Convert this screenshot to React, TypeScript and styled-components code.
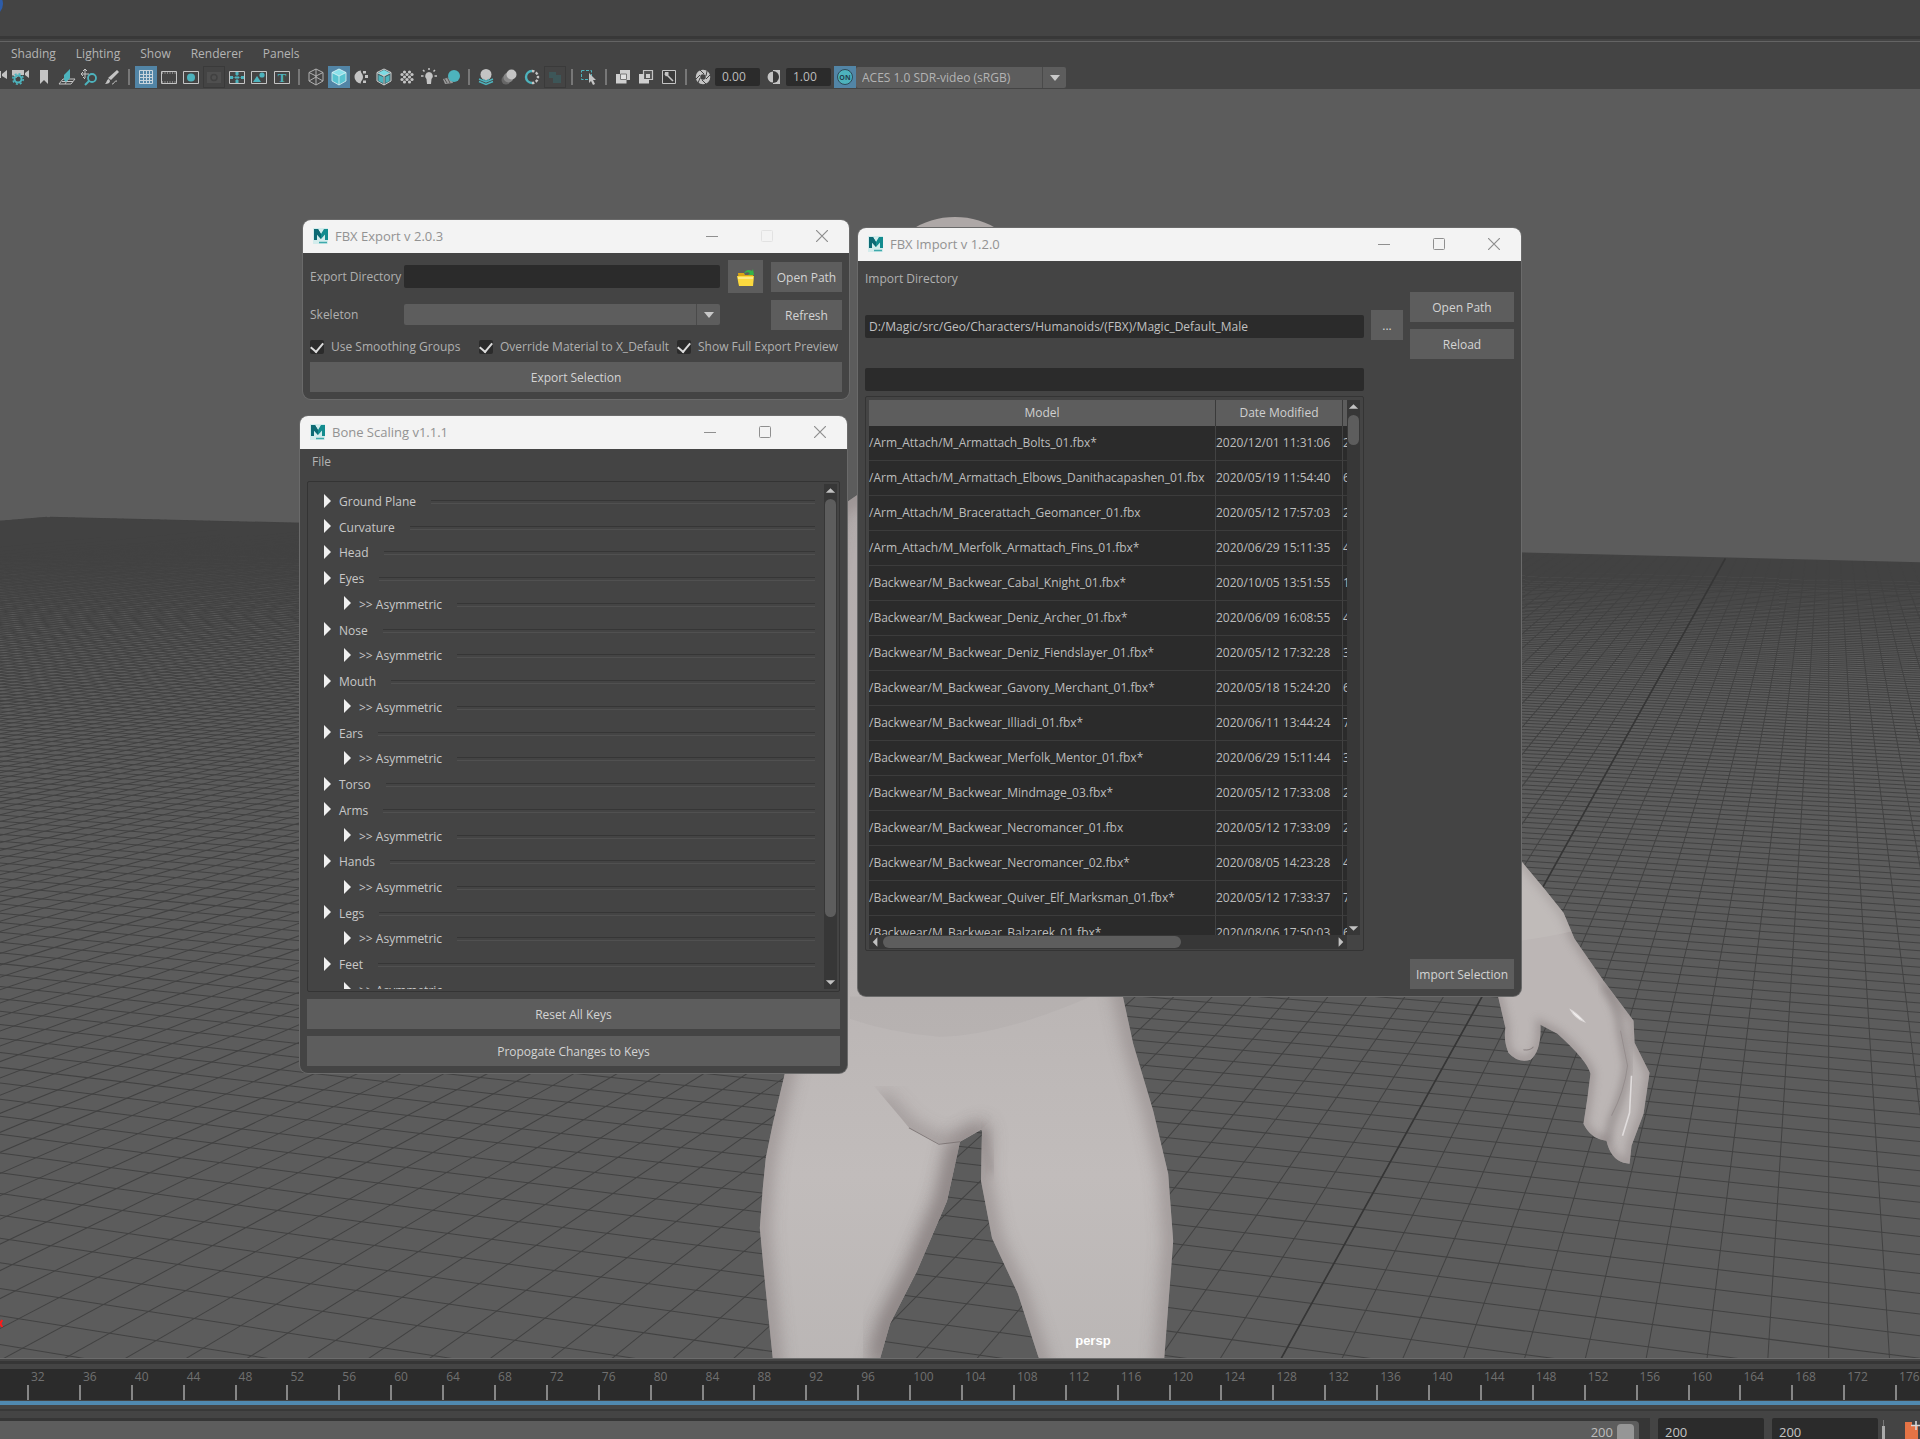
import React from "react";
import styled, { createGlobalStyle, css } from "styled-components";

const TEAL = "#4db3bd";
const LIGHT = "#c4c4c4";

const GlobalStyle = createGlobalStyle`
  * { box-sizing: border-box; }
  body { margin: 0; background: #444444; }
  body, button, input, select, table {
    font-family: "Open Sans", "Noto Sans", sans-serif;
    font-size: 12px;
    line-height: 18px;
    color: #bdbdbd;
  }
  button, input, select { margin: 0; border: 0; border-radius: 0; padding: 0; }
  svg { display: block; }
`;

const Shell = styled.div`
  display: flex;
  flex-direction: column;
  height: 100vh;
  overflow: hidden;
  background: #444444;
`;

/* ---------- top bars ---------- */

const Shelf = styled.div`
  flex: none;
  height: 36px;
`;

const Rule = styled.div<{ $tone: string; $size: number }>`
  flex: none;
  height: ${(p) => p.$size}px;
  background: ${(p) => p.$tone};
`;

const MenuBar = styled.nav`
  flex: none;
  display: flex;
  align-items: center;
  gap: 20px;
  height: 23px;
  padding: 1px 0 0 11px;
`;

const MenuButton = styled.button`
  background: none;
  color: #b4b4b4;
`;

const ToolBar = styled.div`
  flex: none;
  display: flex;
  align-items: center;
  height: 24px;
`;

const ToolGroup = styled.div<{ $width: number }>`
  flex: none;
  display: flex;
  justify-content: space-between;
  width: ${(p) => p.$width}px;
`;

const Tool = styled.button<{ $active?: boolean; $off?: boolean }>`
  width: 22px;
  height: 22px;
  background: ${(p) => (p.$active ? "#5285a6" : "none")};
  ${(p) => p.$off && css`box-shadow: inset 0 0 0 1px #3a3a3a;`}
`;

const Separator = styled.span`
  flex: none;
  width: 12px;
  height: 16px;
  background: linear-gradient(#777, #777) center / 2px 100% no-repeat;
`;

const NumberField = styled.input`
  width: 45px;
  height: 18px;
  margin: 0 3px 0 1px;
  padding-left: 7px;
  background: #2b2b2b;
  border-radius: 2px;
`;

const Combo = styled.div<{ $width?: number }>`
  position: relative;
  display: flex;
  height: 21px;
  ${(p) => (p.$width ? `width: ${p.$width}px;` : "flex: 1;")}
  background: #5d5d5d;
  border-radius: 2px;
  &::before {
    content: "";
    position: absolute;
    right: 23px;
    width: 1px;
    height: 100%;
    background: #4a4a4a;
  }
  &::after {
    content: "";
    position: absolute;
    right: 6px;
    top: 8px;
    border: 5px solid transparent;
    border-top: 6px solid #c8c8c8;
    border-bottom: 0;
  }
`;

const ComboSelect = styled.select`
  appearance: none;
  flex: 1;
  padding: 2px 0 0 6px;
  background: transparent;
  color: #b4b4b4;
`;

/* ---------- viewport ---------- */

const Viewport = styled.main`
  position: relative;
  flex: 1;
  min-height: 0;
  background: #5c5c5c;
  border-bottom: 1px solid #6c6c6c;
`;

const Scene = styled.svg`
  width: 100%;
  height: 100%;
`;

const CameraName = styled.span`
  position: absolute;
  left: 56%;
  bottom: 8px;
  color: #ffffff;
  font: bold 13px/18px "Liberation Sans", sans-serif;
`;

/* ---------- floating windows ---------- */

const Frame = styled.section<{ $x: number; $y: number; $w: number; $h: number }>`
  position: absolute;
  left: ${(p) => p.$x}px;
  top: ${(p) => p.$y}px;
  width: ${(p) => p.$w}px;
  height: ${(p) => p.$h}px;
  display: flex;
  flex-direction: column;
  overflow: hidden;
  border-radius: 8px;
  background: #444444;
  box-shadow: 0 0 0 1px #6a6a6a;
`;

const TitleBar = styled.header`
  flex: none;
  display: flex;
  align-items: center;
  height: 33px;
  padding: 0 0 2px 9px;
  background: #f3f3f3;
`;

const Title = styled.h2`
  flex: 1;
  margin: 0 0 0 5px;
  font-size: 13px;
  font-weight: 400;
  color: #929292;
`;

const Caption = styled.button<{ $faint?: boolean }>`
  width: 55px;
  height: 31px;
  background: none;
  color: ${(p) => (p.$faint ? "#e2e2e2" : "#8f8f8f")};
  svg { margin: 0 auto; }
`;

const Push = styled.button`
  flex: none;
  height: 30px;
  padding-top: 2px;
  background: #5d5d5d;
  color: #d4d4d4;
`;

const TextBox = styled.input`
  height: 23px;
  width: 100%;
  padding: 0 4px;
  background: #2b2b2b;
  border-radius: 2px;
  color: #c0c0c0;
`;

const FieldLabel = styled.label`
  padding-top: 1px;
  color: #b0b0b0;
  white-space: nowrap;
`;

/* export window */

const ExportBody = styled.div`
  flex: 1;
  display: flex;
  flex-direction: column;
  justify-content: space-between;
  padding: 7px;
`;

const ExportGrid = styled.div`
  display: grid;
  grid-template-columns: 86px 1fr 35px 71px;
  grid-template-rows: 33px 33px;
  row-gap: 5px;
  column-gap: 8px;
  align-items: center;
`;

const FolderButton = styled(Push)`
  height: 33px;
  svg { margin: 0 auto; }
`;

const RefreshButton = styled(Push)`
  grid-column: 4;
`;

const Checks = styled.div`
  display: grid;
  grid-template-columns: 169px 198px 1fr;
`;

const CheckLabel = styled.label`
  display: flex;
  align-items: center;
  gap: 7px;
  color: #b0b0b0;
  white-space: nowrap;
`;

const CheckInput = styled.input`
  appearance: none;
  width: 14px;
  height: 14px;
  background: #2b2b2b;
  border-radius: 2px;
  display: grid;
  place-items: center;
  &:checked::before {
    content: "";
    width: 6px;
    height: 10px;
    margin-bottom: 3px;
    border: solid #dcdcdc;
    border-width: 0 2px 2px 0;
    transform: rotate(40deg);
  }
`;

/* bone scaling window */

const BoneMenu = styled.nav`
  flex: none;
  display: flex;
  align-items: center;
  height: 25px;
  padding-left: 12px;
`;

const BoneBody = styled.div`
  flex: 1;
  min-height: 0;
  display: flex;
  flex-direction: column;
  gap: 7px;
  padding: 7px;
`;

const ListFrame = styled.div`
  flex: 1;
  min-height: 0;
  display: flex;
  overflow: hidden;
  padding: 2px;
  border: 1px solid #343434;
  border-radius: 2px;
`;

const ListClip = styled.div`
  flex: 1;
  overflow: hidden;
`;

const SectionList = styled.div`
  display: flex;
  flex-direction: column;
  justify-content: space-between;
  height: 518px;
  padding: 7px 9px 0 14px;
`;

const SectionButton = styled.button<{ $nested?: boolean }>`
  flex: none;
  display: flex;
  align-items: center;
  height: 22px;
  padding-left: ${(p) => (p.$nested ? 20 : 0)}px;
  background: none;
  color: #c8c8c8;
  &::before {
    content: "";
    margin: 0 8px 3px 0;
    border: 7px solid transparent;
    border-left-color: #f0f0f0;
    border-right: 0;
  }
  &::after {
    content: "";
    flex: 1;
    height: 2px;
    margin-left: 15px;
    border-top: 1px solid #363636;
    border-bottom: 1px solid #505050;
  }
`;

/* scroll bars */

const arrows = {
  up: "M2 9 L7 4 L12 9 Z",
  down: "M2 5 L7 10 L12 5 Z",
  left: "M9 2 L4 7 L9 12 Z",
  right: "M5 2 L10 7 L5 12 Z",
};

const Track = styled.div<{ $row?: boolean }>`
  flex: none;
  display: flex;
  flex-direction: ${(p) => (p.$row ? "row" : "column")};
  ${(p) => (p.$row ? "height: 14px;" : "width: 13px;")}
  background: #373737;
  overflow: hidden;
`;

const Thumb = styled.div<{ $size: number }>`
  flex: 0 0 ${(p) => p.$size}px;
  margin: 1px;
  border-radius: 6px;
  background: #5d5d5d;
`;

const Fill = styled.div`
  flex: 1;
`;

const ArrowMark = styled.svg`
  flex: none;
  width: 13px;
  height: 14px;
  fill: #c2c2c2;
`;

const Arrow = ({ dir }: { dir: keyof typeof arrows }) => (
  <ArrowMark viewBox="0 0 14 14" aria-hidden="true">
    <path d={arrows[dir]} />
  </ArrowMark>
);

/* import window */

const ImportBody = styled.div`
  flex: 1;
  min-height: 0;
  display: grid;
  grid-template-columns: 1fr 32px 104px;
  column-gap: 7px;
  padding: 8px 7px 7px;
`;

const ImportMain = styled.div`
  display: flex;
  flex-direction: column;
  min-width: 0;
  min-height: 0;
  padding-bottom: 38px;
`;

const PathRow = styled.div`
  padding: 27px 0 30px;
`;

const SideColumn = styled.div<{ $top: number }>`
  display: flex;
  flex-direction: column;
  gap: 7px;
  padding-top: ${(p) => p.$top}px;
`;

const TableFrame = styled.div`
  flex: 1;
  min-height: 0;
  display: grid;
  grid-template-columns: 1fr 13px;
  grid-template-rows: 1fr 14px;
  margin-top: 5px;
  padding: 3px 3px 1px;
  border: 1px solid #343434;
  border-radius: 2px;
`;

const TableClip = styled.div`
  min-width: 0;
  min-height: 0;
  overflow: hidden;
  background: #2b2b2b;
`;

const FileTable = styled.table`
  table-layout: fixed;
  width: 640px;
  border-spacing: 0;
  th, td {
    padding: 0;
    border-right: 1px solid #424242;
    font-weight: 400;
    text-align: left;
    white-space: nowrap;
    overflow: hidden;
  }
  th {
    height: 26px;
    background: #5d5d5d;
    border-right-color: #3a3a3a;
    color: #d0d0d0;
    text-align: center;
  }
  td {
    height: 35px;
    border-bottom: 1px solid #3c3c3c;
  }
`;

const ModelColumn = styled.col`
  width: 347px;
`;

const DateColumn = styled.col`
  width: 127px;
`;

/* timeline */

const Timeline = styled.div`
  flex: none;
  overflow: hidden;
  height: 31px;
  background: #2b2b2b;
`;

const TickRow = styled.ol`
  display: flex;
  list-style: none;
  margin: 0 -27px 0 27px;
  padding: 0;
`;

const Tick = styled.li`
  flex: 1 1 0;
  height: 31px;
  padding-left: 4px;
  line-height: 15px;
  color: #707070;
  background: linear-gradient(#868686, #868686) left bottom / 2px 15px no-repeat;
`;

const RangeRow = styled.footer`
  flex: none;
  display: flex;
  align-items: stretch;
  height: 21px;
`;

const RangeTrack = styled.div`
  flex: 1;
  padding: 3px 11px 0 0;
  background: #363636;
`;

const RangeBar = styled.div`
  display: flex;
  justify-content: flex-end;
  gap: 4px;
  height: 18px;
  padding: 3px 5px 0 0;
  background: #5d5d5d;
  border-radius: 0 4px 0 0;
`;

const RangeValue = styled.output`
  font-size: 13px;
  line-height: 16px;
`;

const RangeGrip = styled.span`
  width: 17px;
  height: 20px;
  border-radius: 4px;
  background: #969696;
`;

const RangeField = styled.input`
  width: 106px;
  margin-left: 8px;
  padding: 7px 7px 0;
  background: #2b2b2b;
  border-radius: 2px 2px 0 0;
  font-size: 13px;
  color: #c4c4c4;
`;

/* ---------- icons ---------- */

const cube = "M11 3 L18 6.5 V15 L11 19 L4 15 V6.5 Z";

const icons: Record<string, React.ReactNode> = {
  cameraGear: (
    <>
      <path d="M2 4h12v5H9.500L6 12 3.500 9.500H2z M15 7l4-3v8l-4-3z" fill={LIGHT} />
      <circle cx="8" cy="13" r="3.500" fill="none" stroke={TEAL} strokeWidth="2" />
      <circle cx="8" cy="13" r="5.200" fill="none" stroke={TEAL} strokeWidth="1.600" strokeDasharray="2 2.080" />
    </>
  ),
  bookmark: <path d="M7 4h8v14l-4-4-4 4z" fill={LIGHT} />,
  plane: (
    <>
      <path d="M3 18l4-5h12l-4 5z M6 15.500h11 M9 18l3-5" fill="none" stroke={LIGHT} />
      <path d="M8 14V9l6-6v9l-4 4z" fill={TEAL} />
    </>
  ),
  panZoom: (
    <>
      <circle cx="14" cy="12" r="4" fill="none" stroke={TEAL} strokeWidth="1.800" />
      <path d="M11 15l-4 4" stroke={TEAL} strokeWidth="2" />
      <path d="M7 3v9M3 8h8M5 5l2-2 2 2M5 6L3 8l2 2M5 11l2 2" stroke={LIGHT} fill="none" />
    </>
  ),
  pencil: (
    <>
      <path d="M16 4l2 2-8 8-3-2z" fill={LIGHT} />
      <path d="M8 13c-2 0-2 3-4 5 3 0 5-1 5-3" fill={LIGHT} />
      <path d="M11 18c3 0 1-3 5-3" fill="none" stroke={LIGHT} />
    </>
  ),
  grid: (
    <path d="M4.500 4.500h13v13h-13z M8.500 4v14M11.500 4v14M14.500 4v14M4 8.500h14M4 11.500h14M4 14.500h14" fill="none" stroke="#c8d4dc" />
  ),
  film: (
    <>
      <path d="M3.500 5.500h15v12h-15z" fill="none" stroke={LIGHT} />
      <path d="M4 7h14M4 16h14" stroke={LIGHT} strokeDasharray="1 1.500" />
    </>
  ),
  gate: (
    <>
      <path d="M3.500 5.500h15v12h-15z" fill="none" stroke={LIGHT} />
      <circle cx="11" cy="11.500" r="4" fill={TEAL} />
    </>
  ),
  gateOff: (
    <>
      <path d="M4 6h14v11H4z" fill="#4f4f4f" />
      <circle cx="11" cy="11.500" r="3" fill="none" stroke="#414141" strokeWidth="1.500" />
    </>
  ),
  chart: (
    <>
      <path d="M3.500 5.500h15v12h-15z" fill="none" stroke={LIGHT} />
      <path d="M9.500 6h3v3h-3z M9.500 14h3v3h-3z M4 10h3v3H4z M15 10h3v3h-3z M9 10.500h4v2H9z" fill={TEAL} />
      <path d="M7.500 11.500h7M11 9v5" stroke={TEAL} strokeDasharray="1 1" />
    </>
  ),
  safeAction: (
    <>
      <path d="M3.500 5.500h15v12h-15z" fill="none" stroke={LIGHT} />
      <path d="M5 16l4-6 4 6z" fill={TEAL} />
      <circle cx="14" cy="9" r="2.600" fill={TEAL} />
    </>
  ),
  safeTitle: (
    <>
      <path d="M3.500 5.500h15v12h-15z" fill="none" stroke={LIGHT} />
      <text x="11" y="16" textAnchor="middle" fontSize="13" fontWeight="700" fontFamily="Liberation Serif, serif" fill={TEAL}>T</text>
    </>
  ),
  wireCube: (
    <path d={`${cube} M4 6.500l7 3.500 7-3.500 M11 10v9 M11 3v8 M4 15l7-4 7 4`} fill="none" stroke="#b0b0b0" />
  ),
  solidCube: (
    <>
      <path d={cube} fill="#58c3d0" />
      <path d="M11 3l7 3.500-7 3.500-7-3.500z" fill="#8be0ea" />
      <path d={`${cube} M4 6.500l7 3.500 7-3.500 M11 10v9`} fill="none" stroke="#e0f2f4" strokeWidth=".8" />
    </>
  ),
  halfSphere: (
    <>
      <path d="M11 4.500a6.500 6.500 0 0 0 0 13c-1-2 2-3 2-6.500s-3-4.500-2-6.500z" fill={LIGHT} />
      <path d="M13 5h3v2.500h-3z M15 9h3v3h-3z M13 14.500h3V17h-3z" fill={LIGHT} />
    </>
  ),
  texturedCube: (
    <>
      <path d={cube} fill="#3d5e62" />
      <path d="M11 4l6 3-6 3-6-3z" fill="#7ddbe4" />
      <path d="M5.500 9l4.500 2v6l-4.500-2z M12.500 11l4-2v6l-4 2z" fill={TEAL} />
      <path d={`${cube} M4 6.500l7 3.500 7-3.500 M11 10v9`} fill="none" stroke="#d0d0d0" />
    </>
  ),
  checker: (
    <g fill={LIGHT}>
      {[[8.500, 6], [13.500, 6], [6, 8.500], [11, 8.500], [16, 8.500], [8.500, 11], [13.500, 11], [6, 13.500], [11, 13.500], [16, 13.500], [8.500, 16], [13.500, 16]].map(
        ([x, y]) => <circle key={`${x}-${y}`} cx={x} cy={y} r="1.600" />
      )}
    </g>
  ),
  bulb: (
    <>
      <path d="M11 6a4 4 0 0 1 2.500 7l-.5 5h-4l-.5-5A4 4 0 0 1 11 6z" fill={LIGHT} />
      <path d="M11 2v2M5 4l1.500 1.500M17 4l-1.500 1.500M3 10h2.500M16.500 10H19" stroke={LIGHT} strokeWidth="1.500" />
    </>
  ),
  shadow: (
    <>
      <path d="M2 13l8-2 2 6-8 1z" fill="#9a9a9a" />
      <circle cx="13" cy="10" r="6" fill={TEAL} />
      <path d="M3 12l3 5M6 11l3 6" stroke="#555" />
    </>
  ),
  occlusion: (
    <>
      <path d="M4 13l7 3 7-3M4 15.500l7 3 7-3" fill="none" stroke={TEAL} strokeWidth="1.400" />
      <circle cx="11" cy="8.500" r="5.500" fill={LIGHT} />
      <path d="M8 13l3 2 3-2" fill="none" stroke={TEAL} />
    </>
  ),
  motionBlur: (
    <>
      <circle cx="8" cy="14" r="4.500" fill="#666" />
      <circle cx="10.500" cy="11.500" r="5" fill="#888" />
      <circle cx="13.500" cy="8.500" r="5" fill={LIGHT} />
    </>
  ),
  antiAlias: (
    <>
      <path d="M11 5a6 6 0 0 0 0 12" fill="none" stroke={TEAL} strokeWidth="2.400" />
      <path d="M11 5a6 6 0 0 1 0 12" fill="none" stroke={LIGHT} strokeWidth="2.400" strokeDasharray="2.500 1.500" />
    </>
  ),
  depthOff: <path d="M5 6h7v6H5z M9 9h8v8H9z" fill="#3d5658" />,
  select: (
    <>
      <path d="M3.500 4.500h10v9h-10z" fill="none" stroke={TEAL} strokeDasharray="3 1.500" />
      <path d="M11 7l7 7h-3l2 4-2 1-2-4-2 2z" fill={LIGHT} />
    </>
  ),
  copyA: (
    <>
      <path d="M8 4h10v10h-3.500v3.500H4V8h4z" fill="#cfcfcf" />
      <path d="M8.500 8v5.500h6V8z" fill="#e2e2e2" stroke="#777" />
    </>
  ),
  copyB: (
    <>
      <path d="M8.500 4.500h9v9h-9z" fill="#555" stroke={LIGHT} strokeWidth="1.200" />
      <path d="M4 8h5v5h5v4.500H4z M11 8h4v4h-4z" fill="#cfcfcf" />
    </>
  ),
  resize: (
    <>
      <path d="M4.500 4.500h13v13h-13z" fill="#3a3a3a" stroke={LIGHT} />
      <path d="M9 9l6 6" stroke={LIGHT} strokeWidth="1.600" />
      <path d="M7 6h3.500v3L8 10.500 6.500 8.500z" fill={LIGHT} />
    </>
  ),
  aperture: (
    <>
      <circle cx="11" cy="11" r="5" fill="none" stroke={LIGHT} strokeWidth="4.500" />
      <path d="M8 4l4 4M18 9l-4 4M14 18l-4-4M4 13l4-4M15 5l-1 5M6 17l2-5" stroke="#444" />
    </>
  ),
  contrast: (
    <>
      <path d="M10 4h7v14h-7z" fill={LIGHT} />
      <circle cx="10" cy="11" r="6" fill="#3a3a3a" />
      <path d="M10 5.500a5.500 5.500 0 0 0 0 11z" fill={LIGHT} />
    </>
  ),
  on: (
    <>
      <circle cx="11" cy="11" r="7.500" fill={TEAL} stroke="#2d4a58" />
      <text x="11" y="13.500" textAnchor="middle" fontSize="7" fontWeight="700" fill="#23424e">ON</text>
    </>
  ),
};

const Icon = ({ name }: { name: string }) => (
  <svg width="22" height="22" viewBox="0 0 22 22" aria-hidden="true">{icons[name]}</svg>
);

type ToolSpec = { name: string; active?: boolean; off?: boolean };

const toolGroups: { width: number; tools: ToolSpec[] }[] = [
  { width: 113, tools: [{ name: "cameraGear" }, { name: "bookmark" }, { name: "plane" }, { name: "panZoom" }, { name: "pencil" }] },
  { width: 158, tools: [{ name: "grid", active: true }, { name: "film" }, { name: "gate" }, { name: "gateOff", off: true }, { name: "chart" }, { name: "safeAction" }, { name: "safeTitle" }] },
  { width: 158, tools: [{ name: "wireCube" }, { name: "solidCube", active: true }, { name: "halfSphere" }, { name: "texturedCube" }, { name: "checker" }, { name: "bulb" }, { name: "shadow" }] },
  { width: 91, tools: [{ name: "occlusion" }, { name: "motionBlur" }, { name: "antiAlias" }, { name: "depthOff", off: true }] },
  { width: 22, tools: [{ name: "select" }] },
  { width: 68, tools: [{ name: "copyA" }, { name: "copyB" }, { name: "resize" }] },
];

const MayaLogo = () => (
  <svg width="18" height="18" viewBox="0 0 18 18" aria-hidden="true">
    <path d="M1 1h15v16H1z" fill="#d3ecec" />
    <path d="M2 2h4l3 5 3-5h4v11h-3V7.500L9 12 5 7.500V13H2z" fill="#138c8f" />
    <path d="M2 2h4l3 5v5L5 7.500V13H2z" fill="#0d6a74" />
    <path d="M7 15.500h8" stroke="#3fa9ab" strokeWidth="1.600" />
  </svg>
);

const FolderIcon = () => (
  <svg width="20" height="20" viewBox="0 0 20 20" aria-hidden="true">
    <path d="M2 5h6l1 2h8v11H3z" fill="#d9a514" />
    <path d="M1 8h17l-1 10H3z" fill="#fbd93f" />
    <path d="M2 9h15v2H2z" fill="#fde985" />
    <path d="M8 6c1-4 5-5 8-3l1-2 1 6-6 0 2-2c-2-1-4-1-6 1z" fill="#35b24a" />
  </svg>
);

/* ---------- 3D scene ---------- */

const VANISH_X = 1828;
const VANISH_LEFT = -5900;
const HORIZON = 372;
const FLOOR = 1400;
const CELL = 60.76 / 985;
const LEFT_SLOPE = -199 * CELL;
const FAR_TILT = 178 / 7300;

/* distance below the horizon at which a depth line crosses a cross line of the given tilt */
const meet = (tilt: number, slope: number) => (tilt * (VANISH_X - VANISH_LEFT)) / (1 - tilt * slope);

function depthLine(slope: number) {
  const far = meet(FAR_TILT, slope);
  const x = (t: number) => (VANISH_X + slope * t).toFixed(2);
  return `M${x(far)} ${(HORIZON + far).toFixed(2)}L${x(FLOOR - HORIZON)} ${FLOOR}`;
}

function depthLines() {
  let d = "";
  for (let k = -199; k <= 60; k++) d += depthLine(k * CELL);
  return d;
}

function crossLines() {
  let d = "";
  for (let n = 28; n <= 220; n++) {
    const tilt = 1 / ((n + 0.6) * 2.552e-5) / 7300;
    const startX = Math.max(-20, VANISH_X + LEFT_SLOPE * meet(tilt, LEFT_SLOPE));
    const y = (x: number) => (HORIZON + tilt * (x - VANISH_LEFT)).toFixed(2);
    d += `M${startX.toFixed(2)} ${y(startX)}L1960 ${y(1960)}`;
  }
  return d;
}

const torso =
  "M857 495 L835 510 L800 700 L810 960 L784 1077 L773 1123 L766 1157 L763 1187 L760 1227 L765 1280 L773 1358 L773 1400 L870 1400 L880 1358 L890 1323 L917 1270 L947 1200 L960 1141 L981 1129 L982 1130 L981 1180 L992 1237 L1018 1293 L1039 1358 L1050 1400 L1164 1400 L1164 1358 L1173 1240 L1168 1173 L1153 1110 L1133 1043 L1123 997 L1110 900 L1100 500 Z";
const hand =
  "M1500 838 L1522 862 L1543 887 L1563 912 L1574 938 L1603 980 L1633 1020 L1634 1042 L1649 1072 L1643 1113 L1631 1145 L1629 1163 L1623 1162 Q1610 1158 1606 1140 Q1590 1138 1583 1123 L1587 1097 L1590 1073 Q1587 1060 1557 1033 L1540 1024 Q1541 1050 1530 1059 Q1518 1063 1508 1052 Q1503 1040 1505 1027 L1498 997 L1480 960 Z";

const SceneDrawing = () => (
  <Scene viewBox="0 89 1920 1268" preserveAspectRatio="xMidYMid slice" aria-hidden="true">
    <defs>
      <linearGradient id="skin" x1="0" x2="0" y1="0" y2="1">
        <stop offset="0" stopColor="#b3acac" />
        <stop offset="0.5" stopColor="#b9b4b3" />
        <stop offset="0.75" stopColor="#c1bcbb" />
        <stop offset="1" stopColor="#b9b5b4" />
      </linearGradient>
      <filter id="soft" x="-20%" y="-20%" width="140%" height="140%">
        <feGaussianBlur stdDeviation="9" />
      </filter>
      <filter id="softer" x="-20%" y="-20%" width="140%" height="140%">
        <feGaussianBlur stdDeviation="4" />
      </filter>
      <clipPath id="torsoClip"><path d={torso} /></clipPath>
      <clipPath id="handClip"><path d={hand} /></clipPath>
      <clipPath id="pelvisClip"><path d="M900 1116 L909 1127 L939 1143 L960 1141 L983 1127 L1100 1020 L1100 900 L850 900 V1057 Z" /></clipPath>
      <clipPath id="legClip"><path d="M700 1070 L852 1055 L909 1127 L939 1143 L961 1141 L961 1400 L700 1400 Z" /></clipPath>
    </defs>
    <path d={crossLines()} stroke="#424242" fill="none" />
    <path d={depthLines()} stroke="#424242" fill="none" />
    <path d={depthLine(-9 * CELL)} stroke="#363636" strokeWidth="1.600" />
    <ellipse cx="955" cy="262" rx="62" ry="45" fill="#aea8a7" />
    <path d={torso} fill="url(#skin)" />
    <g clipPath="url(#torsoClip)">
      <path d={torso} fill="none" stroke="#857c7c" strokeWidth="14" filter="url(#soft)" opacity=".75" />
      <g clipPath="url(#legClip)">
        <path d="M961 1141 L947 1200 L917 1270 L890 1323 L880 1358" fill="none" stroke="#857d7d" strokeWidth="24" filter="url(#soft)" opacity=".7" />
      </g>
      <g clipPath="url(#pelvisClip)">
        <path d="M880 1095 L909 1127 L939 1143 L960 1141 L980 1129" fill="none" stroke="#8d8484" strokeWidth="12" filter="url(#soft)" opacity=".8" />
        <path d="M850 996H1090Q1000 1035 940 1036Q890 1032 850 1018Z" fill="#a9a3a2" opacity=".25" />
      </g>
      <path d="M909 1127 L939 1143.500 L960 1141" fill="none" stroke="#7f7777" strokeWidth="1" />
      <path d="M983 1128 Q985 1150 992 1172" fill="none" stroke="#8d8585" strokeWidth="8" filter="url(#softer)" opacity=".5" />
    </g>
    <path d={hand} fill="#bcb6b5" />
    <g clipPath="url(#handClip)">
      <path d={hand} fill="none" stroke="#8d8484" strokeWidth="8" filter="url(#softer)" opacity=".65" />
      <path d="M1500 943 Q1545 937 1574 930 L1570 860 H1500Z" fill="#cbc6c5" opacity=".3" />
      <path d="M1603 984 Q1618 1005 1620 1030 L1627 1065 Q1624 1090 1611 1120 L1606 1142" fill="none" stroke="#7d7575" strokeWidth="4" filter="url(#softer)" />
      <path d="M1620 1030 L1627 1065 Q1624 1090 1611 1115" fill="none" stroke="#958d8d" strokeWidth="1" />
      <path d="M1631 1075 L1629 1112 L1622 1135" fill="none" stroke="#e0dcdc" strokeWidth="1.600" />
      <path d="M1570 1009 Q1576 1012 1584 1021 Q1575 1018 1570 1009Z" fill="#f4f1f1" stroke="#dedada" />
      <path d="M1523 1049 Q1530 1050 1533 1046" stroke="#8a8282" fill="none" />
    </g>
    <path d="M-1 1319l4 7M3 1319l-4 7" stroke="#ff1a1a" strokeWidth="2" />
  </Scene>
);

/* ---------- data ---------- */

const sections: { label: string; nested?: boolean }[] = [
  "Ground Plane", "Curvature", "Head", "Eyes", ">> Asymmetric", "Nose", ">> Asymmetric", "Mouth", ">> Asymmetric",
  "Ears", ">> Asymmetric", "Torso", "Arms", ">> Asymmetric", "Hands", ">> Asymmetric", "Legs", ">> Asymmetric",
  "Feet", ">> Asymmetric",
].map((label) => ({ label, nested: label.startsWith(">>") }));

const files: [string, string, string][] = [
  ["/Arm_Attach/M_Armattach_Bolts_01.fbx*", "2020/12/01 11:31:06", "2"],
  ["/Arm_Attach/M_Armattach_Elbows_Danithacapashen_01.fbx", "2020/05/19 11:54:40", "6"],
  ["/Arm_Attach/M_Bracerattach_Geomancer_01.fbx", "2020/05/12 17:57:03", "2"],
  ["/Arm_Attach/M_Merfolk_Armattach_Fins_01.fbx*", "2020/06/29 15:11:35", "4"],
  ["/Backwear/M_Backwear_Cabal_Knight_01.fbx*", "2020/10/05 13:51:55", "1"],
  ["/Backwear/M_Backwear_Deniz_Archer_01.fbx*", "2020/06/09 16:08:55", "4"],
  ["/Backwear/M_Backwear_Deniz_Fiendslayer_01.fbx*", "2020/05/12 17:32:28", "3"],
  ["/Backwear/M_Backwear_Gavony_Merchant_01.fbx*", "2020/05/18 15:24:20", "6"],
  ["/Backwear/M_Backwear_Illiadi_01.fbx*", "2020/06/11 13:44:24", "7"],
  ["/Backwear/M_Backwear_Merfolk_Mentor_01.fbx*", "2020/06/29 15:11:44", "3"],
  ["/Backwear/M_Backwear_Mindmage_03.fbx*", "2020/05/12 17:33:08", "2"],
  ["/Backwear/M_Backwear_Necromancer_01.fbx", "2020/05/12 17:33:09", "2"],
  ["/Backwear/M_Backwear_Necromancer_02.fbx*", "2020/08/05 14:23:28", "4"],
  ["/Backwear/M_Backwear_Quiver_Elf_Marksman_01.fbx*", "2020/05/12 17:33:37", "7"],
  ["/Backwear/M_Backwear_Balzarek_01.fbx*", "2020/08/06 17:50:03", "6"],
];

const frames = Array.from({ length: 37 }, (_, i) => 32 + i * 4);

/* ---------- pieces ---------- */

type ToolWindowProps = {
  title: string;
  x: number;
  y: number;
  w: number;
  h: number;
  fixedSize?: boolean;
  children: React.ReactNode;
};

const ToolWindow = ({ title, x, y, w, h, fixedSize, children }: ToolWindowProps) => (
  <Frame $x={x} $y={y} $w={w} $h={h} aria-label={title}>
    <TitleBar>
      <MayaLogo />
      <Title>{title}</Title>
      <Caption aria-label="Minimize">
        <svg width="12" height="12"><path d="M0 6.500h12" stroke="currentColor" /></svg>
      </Caption>
      <Caption aria-label="Maximize" $faint={fixedSize} disabled={fixedSize}>
        <svg width="12" height="12"><rect x=".5" y=".5" width="11" height="11" rx="1" fill="none" stroke="currentColor" /></svg>
      </Caption>
      <Caption aria-label="Close">
        <svg width="12" height="12"><path d="M0 0l12 12M12 0L0 12" stroke="currentColor" strokeWidth="1.200" /></svg>
      </Caption>
    </TitleBar>
    {children}
  </Frame>
);

const ExportWindow = () => (
  <ToolWindow title="FBX Export v 2.0.3" x={303} y={131} w={546} h={179} fixedSize>
    <ExportBody>
      <ExportGrid>
        <FieldLabel htmlFor="export-dir">Export Directory</FieldLabel>
        <TextBox id="export-dir" />
        <FolderButton aria-label="Browse"><FolderIcon /></FolderButton>
        <Push>Open Path</Push>
        <FieldLabel htmlFor="skeleton">Skeleton</FieldLabel>
        <Combo><ComboSelect id="skeleton" /></Combo>
        <RefreshButton>Refresh</RefreshButton>
      </ExportGrid>
      <Checks>
        {["Use Smoothing Groups", "Override Material to X_Default", "Show Full Export Preview"].map((text) => (
          <CheckLabel key={text}>
            <CheckInput type="checkbox" defaultChecked />
            {text}
          </CheckLabel>
        ))}
      </Checks>
      <Push>Export Selection</Push>
    </ExportBody>
  </ToolWindow>
);

const BoneWindow = () => (
  <ToolWindow title="Bone Scaling v1.1.1" x={300} y={327} w={547} h={657}>
    <BoneMenu><MenuButton>File</MenuButton></BoneMenu>
    <BoneBody>
      <ListFrame>
        <ListClip>
          <SectionList>
            {sections.map((s, i) => (
              <SectionButton key={i} $nested={s.nested}>{s.label}</SectionButton>
            ))}
          </SectionList>
        </ListClip>
        <Track>
          <Arrow dir="up" />
          <Thumb $size={418} />
          <Fill />
          <Arrow dir="down" />
        </Track>
      </ListFrame>
      <Push>Reset All Keys</Push>
      <Push>Propogate Changes to Keys</Push>
    </BoneBody>
  </ToolWindow>
);

const ImportWindow = () => (
  <ToolWindow title="FBX Import v 1.2.0" x={858} y={139} w={663} h={768}>
    <ImportBody>
      <ImportMain>
        <FieldLabel htmlFor="import-dir">Import Directory</FieldLabel>
        <PathRow>
          <TextBox id="import-dir" defaultValue="D:/Magic/src/Geo/Characters/Humanoids/(FBX)/Magic_Default_Male" />
        </PathRow>
        <TextBox aria-label="Filter" />
        <TableFrame>
          <TableClip>
            <FileTable>
              <colgroup>
                <ModelColumn />
                <DateColumn />
                <col />
              </colgroup>
              <thead>
                <tr><th>Model</th><th>Date Modified</th><th /></tr>
              </thead>
              <tbody>
                {files.map(([model, date, size]) => (
                  <tr key={model}><td>{model}</td><td>{date}</td><td>{size}</td></tr>
                ))}
              </tbody>
            </FileTable>
          </TableClip>
          <Track>
            <Arrow dir="up" />
            <Thumb $size={30} />
            <Fill />
            <Arrow dir="down" />
          </Track>
          <Track $row>
            <Arrow dir="left" />
            <Thumb $size={298} />
            <Fill />
            <Arrow dir="right" />
          </Track>
        </TableFrame>
      </ImportMain>
      <SideColumn $top={41}><Push>...</Push></SideColumn>
      <SideColumn $top={23}>
        <Push>Open Path</Push>
        <Push>Reload</Push>
        <Fill />
        <Push>Import Selection</Push>
      </SideColumn>
    </ImportBody>
  </ToolWindow>
);

export default function App() {
  return (
    <Shell>
      <GlobalStyle />
      <Shelf>
        <svg width="4" height="16" aria-hidden="true"><circle cx="-9" cy="4" r="12" fill="#2d5ca8" /></svg>
      </Shelf>
      <Rule $tone="#383838" $size={3} />
      <Rule $tone="#444444" $size={2} />
      <Rule $tone="#646464" $size={1} />
      <MenuBar>
        {["Shading", "Lighting", "Show", "Renderer", "Panels"].map((m) => <MenuButton key={m}>{m}</MenuButton>)}
      </MenuBar>
      <ToolBar>
        <svg width="10" height="22" aria-hidden="true"><path d="M0 5h1v7H0z M2 8l5-4v9L2 10z" fill={LIGHT} /></svg>
        {toolGroups.map((group, i) => (
          <React.Fragment key={i}>
            <ToolGroup $width={group.width}>
              {group.tools.map((t) => (
                <Tool key={t.name} $active={t.active} $off={t.off} disabled={t.off} aria-label={t.name}>
                  <Icon name={t.name} />
                </Tool>
              ))}
            </ToolGroup>
            <Separator />
          </React.Fragment>
        ))}
        <Tool aria-label="Exposure"><Icon name="aperture" /></Tool>
        <NumberField aria-label="Exposure value" defaultValue="0.00" />
        <Tool aria-label="Gamma"><Icon name="contrast" /></Tool>
        <NumberField aria-label="Gamma value" defaultValue="1.00" />
        <Tool $active aria-label="View transform"><Icon name="on" /></Tool>
        <Combo $width={210}>
          <ComboSelect aria-label="Colour space">
            <option>ACES 1.0 SDR-video (sRGB)</option>
          </ComboSelect>
        </Combo>
      </ToolBar>
      <Viewport>
        <SceneDrawing />
        <CameraName>persp</CameraName>
        <ExportWindow />
        <BoneWindow />
        <ImportWindow />
      </Viewport>
      <Rule $tone="#444444" $size={2} />
      <Rule $tone="#363636" $size={3} />
      <Rule $tone="#444444" $size={5} />
      <Timeline>
        <TickRow>{frames.map((f) => <Tick key={f}>{f}</Tick>)}</TickRow>
      </Timeline>
      <Rule $tone="#444444" $size={1} />
      <Rule $tone="#5089b0" $size={4} />
      <Rule $tone="#444444" $size={4} />
      <Rule $tone="#383838" $size={2} />
      <Rule $tone="#444444" $size={7} />
      <RangeRow>
        <RangeTrack>
          <RangeBar>
            <RangeValue>200</RangeValue>
            <RangeGrip />
          </RangeBar>
        </RangeTrack>
        <RangeField aria-label="Playback end" defaultValue="200" />
        <RangeField aria-label="Animation end" defaultValue="200" />
        <svg width="42" height="21" aria-hidden="true">
          <path d="M5.500 2v19" stroke="#777" />
          <path d="M4 8h3v13H4z" fill="#aaa" />
          <path d="M27 4h7v3h6v14H27z" fill="#e57345" />
          <path d="M38 3v9M33 7.500h9" stroke="#d8d8d8" strokeWidth="1.600" />
        </svg>
      </RangeRow>
    </Shell>
  );
}
